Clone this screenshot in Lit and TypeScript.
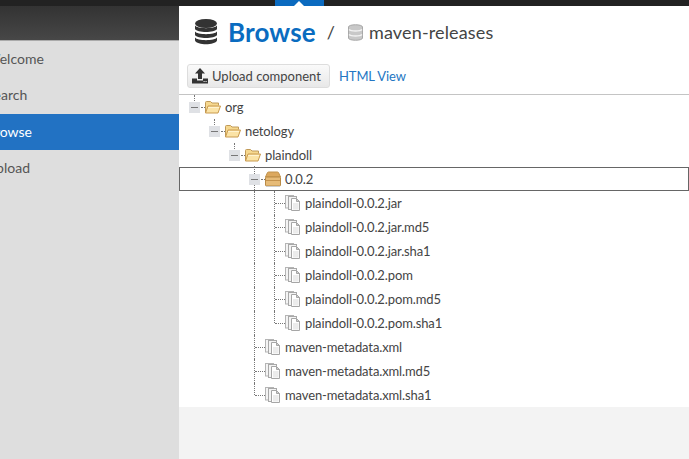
import { LitElement, html, css, svg } from "lit";
import { customElement } from "lit/decorators.js";

type Row = { cells: string[]; icon: "folder" | "pkg" | "file"; text: string; selected?: boolean };

const file = (cells: string[], text: string): Row => ({ cells, icon: "file", text });
const inner = (last: boolean) => ["e", "e", "e", "v", last ? "l" : "t"];
const rows: Row[] = [
  { cells: ["m-top"], icon: "folder", text: "org" },
  { cells: ["e", "m-top"], icon: "folder", text: "netology" },
  { cells: ["e", "e", "m-top"], icon: "folder", text: "plaindoll" },
  { cells: ["e", "e", "e", "m-through"], icon: "pkg", text: "0.0.2", selected: true },
  file(inner(false), "plaindoll-0.0.2.jar"),
  file(inner(false), "plaindoll-0.0.2.jar.md5"),
  file(inner(false), "plaindoll-0.0.2.jar.sha1"),
  file(inner(false), "plaindoll-0.0.2.pom"),
  file(inner(false), "plaindoll-0.0.2.pom.md5"),
  file(inner(true), "plaindoll-0.0.2.pom.sha1"),
  file(["e", "e", "e", "t"], "maven-metadata.xml"),
  file(["e", "e", "e", "t"], "maven-metadata.xml.md5"),
  file(["e", "e", "e", "l"], "maven-metadata.xml.sha1"),
];

const folderIcon = svg`<svg class="ic" width="16" height="16" viewBox="0 0 16 16">
  <path d="M0.5 14V3.5Q0.5 2.5 1.5 2.5H5.5L7 4H13.5V6.5" fill="#f6d88f" stroke="#c09a58"/>
  <path d="M0.5 14L3 7H15.5L13 14Z" fill="#fbe3a6" stroke="#c99a4e"/>
  <rect x="3" y="8" width="11" height="1" fill="#fff3cf"/>
</svg>`;
const pkgIcon = svg`<svg class="ic" width="16" height="16" viewBox="0 0 16 16">
  <path d="M0.5 6L2.5 1.5Q3 1 3.5 1H12.5Q13 1 13.5 1.5L15.5 6Z" fill="#dca85e" stroke="#c0924d"/>
  <rect x="0.5" y="6" width="15" height="9" rx="1" fill="#e6bb78" stroke="#b98a45"/>
  <rect x="1" y="9" width="14" height="1" fill="#c4934e"/>
  <rect x="1" y="15" width="14" height="1" fill="#ccc"/>
</svg>`;
const fileIcon = svg`<svg class="ic" width="16" height="16" viewBox="0 0 16 16">
  <rect x="0.5" y="0.5" width="8" height="12.5" fill="#f4f4f4" stroke="#b5b5b5"/>
  <rect x="3.5" y="1.5" width="8" height="13" fill="#f4f4f4" stroke="#a8a8a8"/>
  <path d="M6.5 3.5H11.5L14.5 6.5V15.5H6.5Z" fill="#fff" stroke="#a6a6a6"/>
  <path d="M11.5 3.5V6.5H14.5Z" fill="#d0d0d0" stroke="#a6a6a6"/>
  <rect x="8" y="8" width="5.5" height="6.5" fill="#ececec"/>
</svg>`;
const icons = { folder: folderIcon, pkg: pkgIcon, file: fileIcon };

@customElement("app-root")
export class AppRoot extends LitElement {
  static styles = css`
    :host {
      display: block;
      width: 689px;
      height: 459px;
      overflow: hidden;
      font-family: "Lato", "Open Sans", sans-serif;
      background: #f3f3f3;
    }
    .top {
      height: 6px;
      background: #222;
      display: flex;
      padding-left: 275px;
    }
    .tab {
      width: 49px;
      height: 6px;
      background: #0b6abf;
      position: relative;
    }
    .tab::after {
      content: "";
      position: absolute;
      left: 19px;
      top: 1px;
      border-left: 5px solid transparent;
      border-right: 5px solid transparent;
      border-bottom: 5px solid #fff;
    }
    .body { display: flex; height: 453px; }
    .side { width: 179px; flex: none; background: #dedede; overflow: hidden; }
    .side-head {
      height: 34px;
      background: linear-gradient(#333, #474747);
      border-bottom: 1px solid #aaa;
    }
    .nav div {
      height: 36.4px;
      line-height: 36px;
      font-size: 14px;
      color: #555;
      text-indent: -14px;
      white-space: nowrap;
    }
    .nav .active { background: #2272c3; color: #fff; }
    .main { flex: 1; min-width: 0; display: flex; flex-direction: column; }
    .head {
      background: #fff;
      height: 89px;
      box-sizing: border-box;
      border-bottom: 1px solid #c4c4c4;
      padding: 13px 0 0 8px;
    }
    .title { display: flex; align-items: center; height: 26px; padding-left: 7px; }
    .title h1 {
      margin: 0 0 0 10px;
      font-size: 26px;
      font-weight: 700;
      letter-spacing: 0.15px;
      color: #0a6cc0;
      line-height: 26px;
    }
    .slash { margin: 0 13px 0 11px; font-size: 18px; color: #444; }
    .repo { margin-left: 6px; font-size: 18px; color: #444; letter-spacing: 0.15px; }
    .tools { display: flex; align-items: center; margin-top: 19px; gap: 9px; }
    .btn {
      box-sizing: border-box;
      width: 143px;
      height: 24px;
      border: 1px solid #ddd;
      border-radius: 3px;
      background: linear-gradient(#fafafa, #e8e8e8);
      display: flex;
      align-items: center;
      padding-left: 4px;
      gap: 4px;
      font-size: 13px;
      color: #444;
      white-space: nowrap;
    }
    .link { font-size: 13px; color: #2476c3; letter-spacing: -0.1px; }
    .tree { background: #fff; }
    .row {
      box-sizing: border-box;
      height: 24px;
      display: flex;
      align-items: center;
      padding-left: 6px;
      font-size: 13px;
      letter-spacing: -0.12px;
      color: #444;
      white-space: nowrap;
    }
    .row.sel { border: 1px solid #666; padding-left: 5px; }
    .cell { width: 20px; height: 100%; flex: none; position: relative; }
    .cell::before, .cell::after { content: ""; position: absolute; }
    .v::before { left: 9px; top: 0; bottom: 0; border-left: 1px dotted #777; }
    .t::before { left: 9px; top: 0; bottom: 0; border-left: 1px dotted #777; }
    .t::after, .l::after { left: 10px; top: 12px; width: 10px; border-top: 1px dotted #777; }
    .l::before { left: 9px; top: 0; height: 12px; border-left: 1px dotted #777; }
    .m-top::before { left: 9px; top: 0; height: 6px; border-left: 1px dotted #777; }
    .m-through::before { left: 9px; top: -2px; bottom: -2px; border-left: 1px dotted #777; }
    .m-top::after, .m-through::after { left: 16px; top: 12px; width: 4px; border-top: 1px dotted #777; }
    .box {
      position: absolute;
      left: 4px;
      top: 7px;
      width: 11px;
      height: 11px;
      background: #dfe1e5;
      display: flex;
      align-items: center;
      justify-content: center;
      z-index: 1;
    }
    .box i { display: block; width: 7px; height: 1px; background: #777; }
    .sel .box { top: 6px; }
    .sel .cell::after { top: 11px; }
    .ic { display: block; flex: none; margin-right: 4px; }
  `;

  render() {
    return html`
      <div class="top"><div class="tab"></div></div>
      <div class="body">
        <aside class="side">
          <div class="side-head"></div>
          <nav class="nav">
            <div>Welcome</div>
            <div>Search</div>
            <div class="active">Browse</div>
            <div>Upload</div>
          </nav>
        </aside>
        <main class="main">
          <header class="head">
            <div class="title">
              <svg width="24" height="26" viewBox="0 0 24 26">
                <ellipse cx="12" cy="4.5" rx="11" ry="4.5" fill="#333"/>
                <path d="M1 6.5C3 10 21 10 23 6.5V10C21 14 3 14 1 10Z" fill="#333"/>
                <path d="M1 12.5C3 16 21 16 23 12.5V16C21 20 3 20 1 16Z" fill="#333"/>
                <path d="M1 18.5C3 22 21 22 23 18.5V21.5C21 26.5 3 26.5 1 21.5Z" fill="#333"/>
              </svg>
              <h1>Browse</h1>
              <span class="slash">/</span>
              <svg width="15" height="17" viewBox="0 0 15 17">
                <path d="M0.5 3C0.5 0 14.5 0 14.5 3V14C14.5 17 0.5 17 0.5 14Z" fill="#c8c8c8" stroke="#a8a8a8"/>
                <path d="M1 5.5C3 7.5 12 7.5 14 5.5M1 10.5C3 12.5 12 12.5 14 10.5" fill="none" stroke="#f2f2f2" stroke-width="1.4"/>
              </svg>
              <span class="repo">maven-releases</span>
            </div>
            <div class="tools">
              <div class="btn">
                <svg width="16" height="16" viewBox="0 0 16 16">
                  <path d="M8 0L13 5.5H10V11H6V5.5H3Z" fill="#333"/>
                  <path d="M0 10.5H5V12.5H11V10.5H16V15.5H0Z" fill="#333"/>
                  <rect x="11.5" y="13" width="1.2" height="1" fill="#ddd"/>
                  <rect x="13.5" y="13" width="1.2" height="1" fill="#ddd"/>
                </svg>
                Upload component
              </div>
              <span class="link">HTML View</span>
            </div>
          </header>
          <section class="tree">
            ${rows.map(
              (r) => html`<div class="row ${r.selected ? "sel" : ""}">
                ${r.cells.map(
                  (c) => html`<span class="cell ${c}">${c.startsWith("m-") ? html`<span class="box"><i></i></span>` : ""}</span>`
                )}
                ${icons[r.icon]}<span>${r.text}</span>
              </div>`
            )}
          </section>
        </main>
      </div>
    `;
  }
}
